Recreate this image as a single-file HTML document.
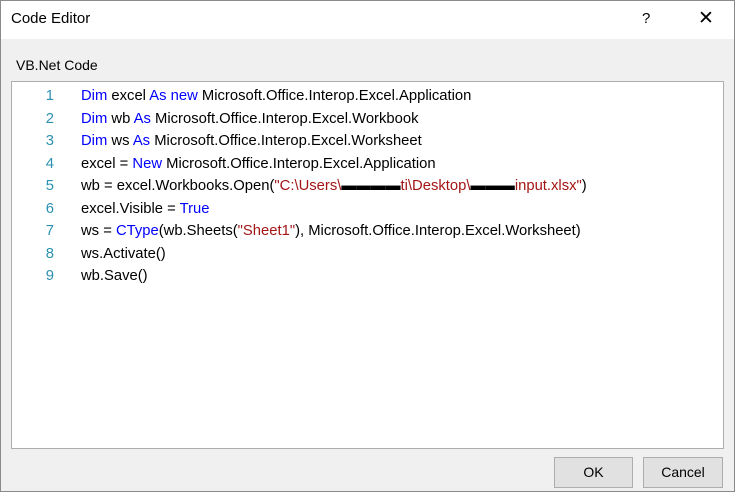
<!DOCTYPE html><html><head><style>
body{margin:0;width:735px;height:492px;overflow:hidden;font-family:"Liberation Sans",sans-serif;}
.win{position:absolute;left:0;top:0;width:733px;height:490px;border:1px solid #8a8a8a;background:#f0f0f0;}
.title{position:absolute;left:0;top:0;width:733px;height:38px;background:#fff;}
.t{position:absolute;left:10px;top:9px;font-size:15px;color:#000;}
.q{position:absolute;left:641px;top:9px;font-size:15px;}
.x{position:absolute;left:697px;top:6px;font-size:19px;}
.lbl{position:absolute;left:15px;top:56px;font-size:14px;}
.ed{position:absolute;left:10px;top:80px;width:711px;height:366px;background:#fff;border:1px solid #adadad;}
.ln{position:absolute;left:0;width:42px;text-align:right;color:#2b91af;font-size:14.8px;}
.cd{position:absolute;left:69px;font-size:14.8px;color:#000;white-space:pre;}
.k{color:#0000ff}.s{color:#a31515}
.btn{position:absolute;top:456px;height:29px;background:#e1e1e1;border:1px solid #adadad;font-size:14px;text-align:center;line-height:29px;}
</style></head><body><div class="win">
<div class="title"><span class="t">Code Editor</span><span class="q">?</span><span class="x">✕</span></div>
<div class="lbl">VB.Net Code</div>
<div class="ed">
<div class="ln" style="top:6px">1</div><div class="cd" style="top:6px"><span class="k">Dim</span> excel <span class="k">As new</span> Microsoft.Office.Interop.Excel.Application</div>
<div class="ln" style="top:28.5px">2</div><div class="cd" style="top:28.5px"><span class="k">Dim</span> wb <span class="k">As</span> Microsoft.Office.Interop.Excel.Workbook</div>
<div class="ln" style="top:51px">3</div><div class="cd" style="top:51px"><span class="k">Dim</span> ws <span class="k">As</span> Microsoft.Office.Interop.Excel.Worksheet</div>
<div class="ln" style="top:73.5px">4</div><div class="cd" style="top:73.5px">excel = <span class="k">New</span> Microsoft.Office.Interop.Excel.Application</div>
<div class="ln" style="top:96px">5</div><div class="cd" style="top:96px">wb = excel.Workbooks.Open(<span class="s">"C:\Users\<b style="color:#000">▬▬▬▬</b>ti\Desktop\<b style="color:#000">▬▬▬</b>input.xlsx"</span>)</div>
<div class="ln" style="top:118.5px">6</div><div class="cd" style="top:118.5px">excel.Visible = <span class="k">True</span></div>
<div class="ln" style="top:141px">7</div><div class="cd" style="top:141px">ws = <span class="k">CType</span>(wb.Sheets(<span class="s">"Sheet1"</span>), Microsoft.Office.Interop.Excel.Worksheet)</div>
<div class="ln" style="top:163.5px">8</div><div class="cd" style="top:163.5px">ws.Activate()</div>
<div class="ln" style="top:186px">9</div><div class="cd" style="top:186px">wb.Save()</div>
</div>
<div class="btn" style="left:553px;width:77px">OK</div>
<div class="btn" style="left:642px;width:78px">Cancel</div>
</div></body></html>
